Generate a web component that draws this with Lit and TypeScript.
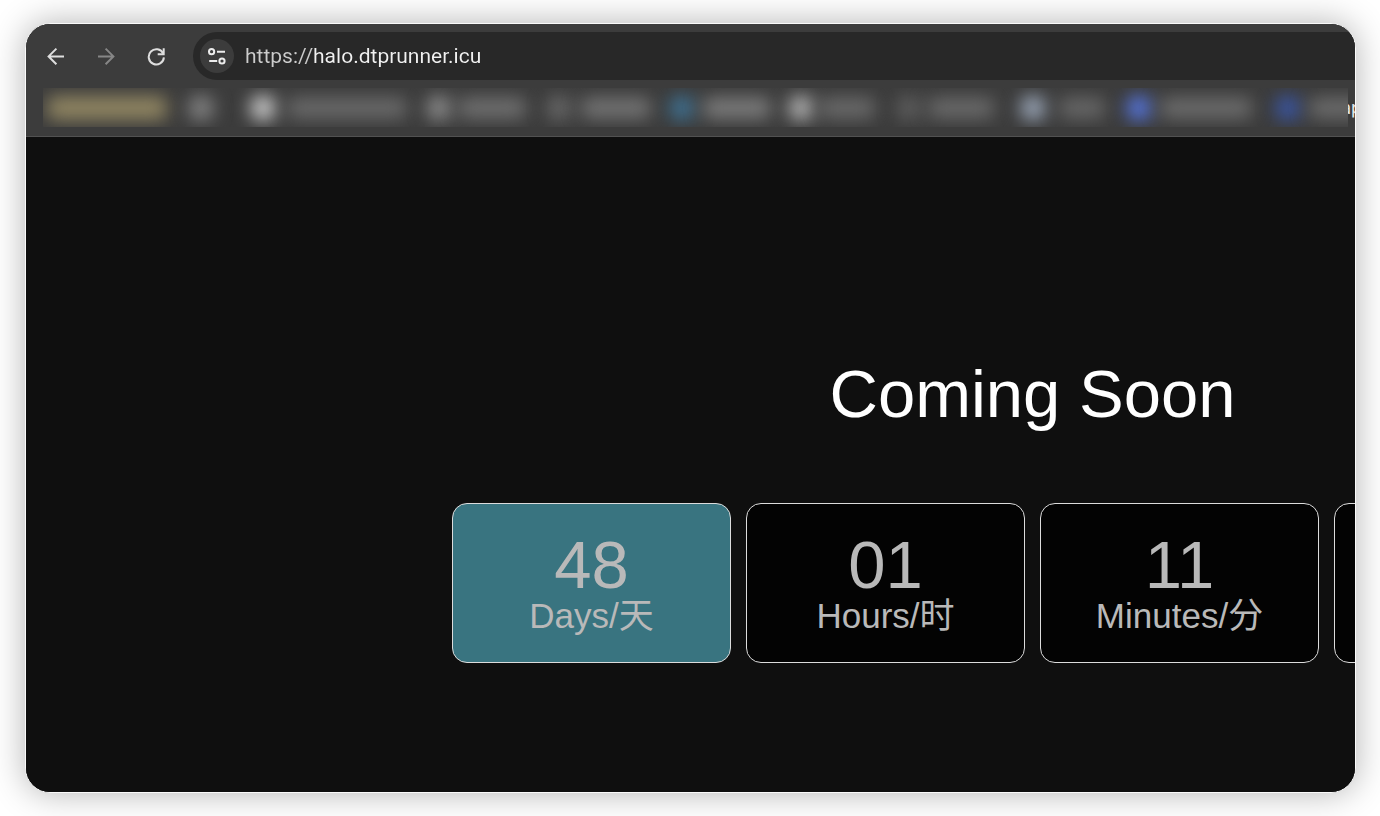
import { LitElement, html, css, nothing } from "lit";
import { customElement, property } from "lit/decorators.js";

interface Bookmark {
  lead: number;
  icon?: string;
  gap?: number;
  label?: number;
  tone?: string;
  tail?: string;
}

interface Unit {
  value: string;
  label: string;
  active?: boolean;
}

const BOOKMARKS: Bookmark[] = [
  { lead: 4, label: 120, tone: "#918662" },
  { lead: 21, icon: "#858585" },
  { lead: 36, icon: "#cfcfcf", gap: 11, label: 120, tone: "#6c6c6c" },
  { lead: 19, icon: "#8c8c8c", gap: 6, label: 68, tone: "#727272" },
  { lead: 20, icon: "#686868", gap: 9, label: 70, tone: "#767676" },
  { lead: 18, icon: "#3f7294", gap: 8, label: 68, tone: "#7f7f7f" },
  { lead: 17, icon: "#b4b4b4", gap: 5, label: 56, tone: "#6c6c6c" },
  { lead: 21, icon: "#5e5e5e", gap: 6, label: 66, tone: "#6c6c6c" },
  { lead: 26, icon: "#9ca8ba", gap: 13, label: 46, tone: "#696969" },
  { lead: 21, icon: "#5676e0", gap: 8, label: 92, tone: "#6e6e6e" },
  { lead: 23, icon: "#3a56a4", gap: 8, label: 60, tone: "#6e6e6e", tail: "ap" },
];

const UNITS: Unit[] = [
  { value: "48", label: "Days/天", active: true },
  { value: "01", label: "Hours/时" },
  { value: "11", label: "Minutes/分" },
  { value: "", label: "" },
];

@customElement("browser-toolbar")
class BrowserToolbar extends LitElement {
  static styles = css`
    :host {
      display: flex;
      align-items: center;
      padding: 8px 0 0 13px;
      background: #3c3c3c;
    }
    .nav {
      display: flex;
      gap: 16px;
      margin-right: 20px;
    }
    button {
      display: grid;
      place-items: center;
      width: 34px;
      height: 34px;
      padding: 0;
      border: 0;
      border-radius: 50%;
      background: none;
      color: #dedede;
    }
    button:disabled {
      color: #868686;
    }
    svg {
      display: block;
      fill: none;
      stroke: currentColor;
      stroke-width: 2;
    }
    .address {
      display: flex;
      flex: 1;
      align-items: center;
      gap: 11px;
      min-width: 0;
      height: 48px;
      padding-left: 7px;
      border-radius: 24px 0 0 24px;
      background: #282828;
    }
    .address .site {
      flex: none;
      background: #3c3c3c;
      color: #ececec;
    }
    .url {
      flex: 1;
      min-width: 0;
      padding: 0;
      border: 0;
      outline: 0;
      background: linear-gradient(to right, #cccccc 67px, #f1f1f1 67px);
      background-clip: text;
      -webkit-background-clip: text;
      -webkit-text-fill-color: transparent;
      color: #f1f1f1;
      font: 21px/28px Roboto, sans-serif;
    }
  `;

  render() {
    return html`
      <nav class="nav" aria-label="History">
        <button aria-label="Back">
          <svg width="20" height="20" viewBox="0 0 20 20">
            <path d="M18 10.4H3M10.4 2.6 2.6 10.4l7.8 7.8" />
          </svg>
        </button>
        <button aria-label="Forward" disabled>
          <svg width="20" height="20" viewBox="0 0 20 20">
            <path d="M2 10.4h15M9.6 2.6l7.8 7.8-7.8 7.8" />
          </svg>
        </button>
        <button aria-label="Reload">
          <svg width="20" height="20" viewBox="0 0 20 20">
            <path d="M17.2 7.6A7.6 7.6 0 1 0 17.9 11.4" />
            <path d="M17.7 2.2v6H11.7" />
          </svg>
        </button>
      </nav>
      <div class="address">
        <button class="site" aria-label="Site information">
          <svg width="20" height="20" viewBox="0 0 20 20">
            <circle cx="4.6" cy="5.7" r="2.6" />
            <path d="M10 5.7h8M2.2 15h8" />
            <circle cx="15" cy="15" r="2.6" />
          </svg>
        </button>
        <input class="url" type="text" aria-label="Address" spellcheck="false" value="https://halo.dtprunner.icu" />
      </div>
    `;
  }
}

@customElement("bookmark-bar")
class BookmarkBar extends LitElement {
  @property({ attribute: false }) items: Bookmark[] = [];

  static styles = css`
    :host {
      display: flex;
      padding: 8px 0 8px 17px;
      border-bottom: 1px solid #525252;
      background: #3c3c3c;
    }
    .frost {
      display: flex;
      flex: 1;
      min-width: 0;
      height: 39px;
      overflow: hidden;
    }
    .item {
      display: flex;
      flex: none;
      align-items: center;
    }
    .icon {
      width: 26px;
      height: 26px;
      border-radius: 50%;
      filter: blur(9px);
    }
    .label {
      height: 20px;
      border-radius: 6px;
      filter: blur(9px);
    }
    .label.tall {
      height: 24px;
    }
    .tail {
      flex: none;
      display: flex;
      justify-content: center;
      width: 7px;
      overflow: hidden;
      color: #e8e8e8;
      font: 18px/40px Inter, sans-serif;
    }
  `;

  render() {
    return html`
      <div class="frost">
        ${this.items.map(
          (b) => html`
            <a class="item" href="#" aria-label="Bookmark" style="margin-left:${b.lead}px;gap:${b.gap ?? 0}px">
              ${b.icon ? html`<span class="icon" style="background:${b.icon}"></span>` : nothing}
              ${b.label
                ? html`<span
                    class="label ${b.icon ? "" : "tall"}"
                    style="width:${b.label}px;background:${b.tone}"
                  ></span>`
                : nothing}
            </a>
          `
        )}
      </div>
      ${this.items.filter((b) => b.tail).map((b) => html`<span class="tail">${b.tail}</span>`)}
    `;
  }
}

@customElement("countdown-page")
class CountdownPage extends LitElement {
  @property({ attribute: false }) units: Unit[] = [];

  static styles = css`
    :host {
      display: block;
      flex: 1;
      padding: 218px 0 64px 426px;
      overflow: hidden;
      background: #0f0f0f;
      font-family: "Liberation Sans", "Noto Sans CJK SC", sans-serif;
    }
    .content {
      width: max-content;
    }
    h1 {
      margin: 0 0 70px;
      color: #ffffff;
      font-size: 67px;
      font-weight: 400;
      line-height: 78px;
      text-align: center;
    }
    .units {
      display: flex;
      gap: 15px;
    }
    .unit {
      box-sizing: border-box;
      width: 279px;
      min-height: 160px;
      padding: 28px 16px;
      border: 1px solid #dcdcdc;
      border-radius: 15px;
      background: #030303;
      color: #b9b9b9;
      text-align: center;
    }
    .unit.active {
      background: #397480;
    }
    .value {
      font-size: 67px;
      line-height: 66px;
    }
    .name {
      font-size: 35px;
      line-height: 36px;
    }
  `;

  render() {
    return html`
      <main class="content">
        <h1>Coming Soon</h1>
        <div class="units">
          ${this.units.map(
            (u) => html`
              <div class="unit ${u.active ? "active" : ""}">
                <div class="value">${u.value}</div>
                <div class="name">${u.label}</div>
              </div>
            `
          )}
        </div>
      </main>
    `;
  }
}

@customElement("app-root")
class AppRoot extends LitElement {
  static styles = css`
    :host {
      display: flex;
      box-sizing: border-box;
      min-height: 100vh;
      padding: 23px 24px 23px 25px;
      background: #ffffff;
    }
    .window {
      display: flex;
      flex: 1;
      flex-direction: column;
      min-width: 0;
      overflow: hidden;
      border: 1px solid #fafafa;
      border-radius: 25px;
      background: #0f0f0f;
      box-shadow: 0 0 34px rgba(0, 0, 0, 0.3);
    }
  `;

  render() {
    return html`
      <div class="window">
        <browser-toolbar></browser-toolbar>
        <bookmark-bar .items=${BOOKMARKS}></bookmark-bar>
        <countdown-page .units=${UNITS}></countdown-page>
      </div>
    `;
  }
}
